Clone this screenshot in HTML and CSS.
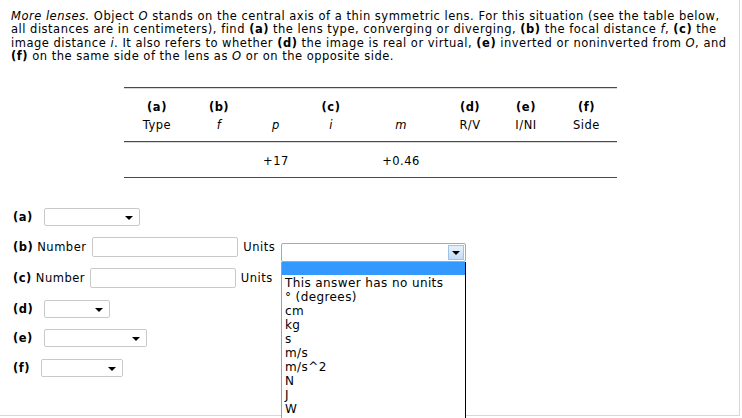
FILE: index.html
```html
<!DOCTYPE html>
<html>
<head>
<meta charset="utf-8">
<link rel="stylesheet" href="styles.css">
</head>
<body>
<div class="page">
  <p class="intro"><i>More lenses.</i> Object <i>O</i> stands on the central axis of a thin symmetric lens. For this situation (see the table below, all distances are in centimeters), find <b>(a)</b> the lens type, converging or diverging, <b>(b)</b> the focal distance <i>f</i>, <b>(c)</b> the image distance <i>i</i>. It also refers to whether <b>(d)</b> the image is real or virtual, <b>(e)</b> inverted or noninverted from <i>O</i>, and <b>(f)</b> on the same side of the lens as <i>O</i> or on the opposite side.</p>

  <div class="table">
    <div class="thead">
      <div class="cell"><b>(a)</b><br>Type</div>
      <div class="cell"><b>(b)</b><br><i>f</i></div>
      <div class="cell"><br><i>p</i></div>
      <div class="cell"><b>(c)</b><br><i>i</i></div>
      <div class="cell"><br><i>m</i></div>
      <div class="cell"><b>(d)</b><br>R/V</div>
      <div class="cell"><b>(e)</b><br>I/NI</div>
      <div class="cell"><b>(f)</b><br>Side</div>
    </div>
    <div class="tbody">
      <div class="cell"></div>
      <div class="cell"></div>
      <div class="cell">+17</div>
      <div class="cell"></div>
      <div class="cell">+0.46</div>
      <div class="cell"></div>
      <div class="cell"></div>
      <div class="cell"></div>
    </div>
  </div>

  <div class="form">
    <div class="row r-a"><b class="lbl">(a)</b><span class="sel w-a"><span class="arrow"></span></span></div>
    <div class="row r-b"><b class="lbl2">(b)</b><span class="txt">Number</span><span class="inp"></span><span class="units">Units</span>
      <span class="usel">
        <span class="ubtn"><span class="arrow"></span></span>
        <span class="list">
          <span class="opt hl"></span>
          <span class="opt">This answer has no units</span>
          <span class="opt">° (degrees)</span>
          <span class="opt">cm</span>
          <span class="opt">kg</span>
          <span class="opt">s</span>
          <span class="opt">m/s</span>
          <span class="opt">m/s^2</span>
          <span class="opt">N</span>
          <span class="opt">J</span>
          <span class="opt">W</span>
        </span>
      </span>
    </div>
    <div class="row r-c"><b class="lbl2">(c)</b><span class="txt">Number</span><span class="inp"></span><span class="units">Units</span></div>
    <div class="row r-d"><b class="lbl">(d)</b><span class="sel w-d"><span class="arrow"></span></span></div>
    <div class="row r-e"><b class="lbl">(e)</b><span class="sel w-e"><span class="arrow"></span></span></div>
    <div class="row r-f"><b class="lbl">(f)</b><span class="sel w-f"><span class="arrow"></span></span></div>
  </div>
</div>
</body>
</html>
```

FILE: styles.css
```css
html, body {
  margin: 0;
  padding: 0;
  background: #fff;
  overflow: hidden;
}
body {
  width: 742px;
  height: 418px;
  font-family: "DejaVu Sans", Verdana, sans-serif;
  font-size: 11.5px;
  letter-spacing: 0.5px;
  color: #000;
}
.page {
  width: 740px;
  height: 416px;
  box-sizing: border-box;
  border-right: 1px solid #d3d7e3;
  border-bottom: 1px solid #d3d7e3;
  padding: 10px 0 0 11px;
}
.intro {
  margin: 0;
  width: 716px;
  line-height: 13.4px;
}
.table {
  margin: 23px 0 0 113px;
  width: 493px;
  border-top: 1px solid #4a4a4a;
  box-shadow: 0 1px 0 #d8d8d8 inset;
}
.thead, .tbody {
  display: grid;
  grid-template-columns: 66px 58px 56px 54px 86px 52px 60px 61px;
  text-align: center;
}
.thead {
  padding: 10px 0 7px;
  line-height: 18px;
  border-bottom: 1px solid #4a4a4a;
}
.tbody {
  border-top: 1px solid #d8d8d8;
  height: 34px;
  align-items: center;
  border-bottom: 1px solid #4a4a4a;
}
.tbody .cell { padding-top: 2px; }
.form {
  margin: 24px 0 0 2px;
  display: flex;
  flex-direction: column;
}
.row {
  display: flex;
  align-items: center;
  height: 30px;
  position: relative;
}
.r-b, .r-c { height: 31px; }
.r-e { height: 29px; }
.lbl {
  width: 31px;
  font-weight: bold;
}
.r-f .lbl { width: 28px; }
.lbl2 {
  font-weight: bold;
  margin-right: 4px;
}
.txt { width: 55px; }
.r-c .txt { width: 54px; }
.sel {
  display: inline-block;
  position: relative;
  height: 16px;
  border: 1px solid #c9c9c9;
  border-radius: 2px;
  background: #fff;
}
.w-a { width: 94px; }
.w-d { width: 64px; }
.w-e { width: 101px; }
.w-f { width: 80px; }
.arrow {
  position: absolute;
  right: 6px;
  top: 7px;
  width: 0;
  height: 0;
  border-left: 4px solid transparent;
  border-right: 4px solid transparent;
  border-top: 4px solid #000;
}
.inp {
  display: inline-block;
  width: 144px;
  height: 18px;
  border: 1px solid #c9c9c9;
  border-radius: 2px;
}
.units { margin-left: 5px; }
.usel {
  position: absolute;
  left: 268px;
  top: 11px;
  width: 183px;
  height: 17px;
  border: 1px solid #82b2e2;
  border-radius: 2px;
  background: #fff;
  z-index: 2;
}
.ubtn {
  position: absolute;
  right: 1px;
  top: 1px;
  width: 16px;
  height: 15px;
  box-sizing: border-box;
  border: 1px solid #9cc3ea;
  background: linear-gradient(#e6f1fb, #c4ddf4);
}
.ubtn .arrow { right: 3px; top: 5px; }
.list {
  position: absolute;
  left: -1px;
  top: 18px;
  width: 185px;
  height: 200px;
  box-sizing: border-box;
  border-left: 1px solid #a0a0a0;
  border-right: 1px solid #000;
  background: #fff;
  display: flex;
  flex-direction: column;
  font-family: "DejaVu Sans", Tahoma, sans-serif;
  font-size: 12px;
  letter-spacing: 0.4px;
}
.opt {
  display: block;
  height: 14px;
  line-height: 14px;
  padding-left: 3px;
  white-space: nowrap;
  flex: none;
}
.opt.hl { background: #3399ff; height: 13px; margin-bottom: 1px; }
```
